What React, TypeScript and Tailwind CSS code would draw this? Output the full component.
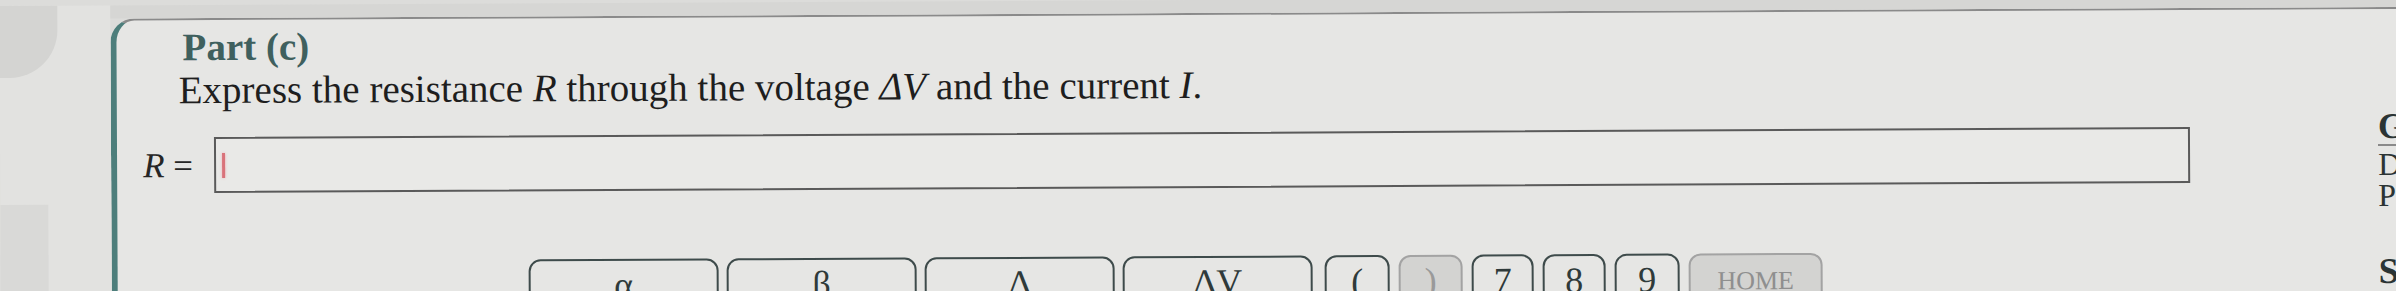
import React from 'react';

const greekKeys = ['α', 'β', 'Δ', 'ΔV'];

// digit / bracket keys: label, width, disabled
const smallKeys: { label: string; w: string; off?: boolean }[] = [
    { label: '(', w: 'w-[65px]' },
    { label: ')', w: 'w-[64px]', off: true },
    { label: '7', w: 'w-[62px]' },
    { label: '8', w: 'w-[63px]' },
    { label: '9', w: 'w-[65px]' },
];

export default function App() {
    return (
        <div className="w-[2396px] h-[291px] overflow-hidden bg-[#dcdcda] font-['Liberation_Serif',serif]">
            {/* the photo is slightly tilted, so the whole page is too */}
            <div className="flex w-full h-full -rotate-[0.29deg]">

                {/* left strip outside the panel */}
                <div className="w-[111px] shrink-0 flex flex-col bg-[#e2e2e0]">
                    <div className="w-[58px] h-[72px] bg-[#d4d4d2] rounded-br-[48px]"></div>
                    <div className="flex-1"></div>
                    <div className="w-[48px] h-[92px] bg-[#d9d9d7]"></div>
                </div>

                <div className="flex-1 flex flex-col">
                    <div className="h-[13px] shrink-0 bg-[#d6d6d4]"></div>

                    {/* panel */}
                    <div className="flex-1 flex bg-[#e6e6e4] border-t-2 border-t-[#8a8a8a] border-l-[6px] border-l-[#4d7e7b] rounded-tl-[24px]">

                        <div className="w-[2261px] shrink-0 flex flex-col pt-[7px]">
                            <h2 className="ml-[66px] text-[39px] leading-[39px] font-bold text-[#3f605e]">
                                Part (c)
                            </h2>
                            <p className="ml-[62px] mt-[5px] text-[39px] leading-[38px] text-[#1e1e1e]">
                                Express the resistance <i>R</i> through the voltage <i>ΔV</i> and the current <i>I</i>.
                            </p>

                            {/* answer row */}
                            <div className="ml-[26px] mt-[28px] flex items-center h-[56px]">
                                <span className="w-[71px] shrink-0 text-[35px] leading-[35px] text-[#262626]">
                                    <i>R</i> =
                                </span>
                                <div className="w-[1976px] h-[56px] shrink-0 border-2 border-[#5a5a5a] bg-[#e9e9e7] flex items-center pl-[6px]">
                                    <div className="w-[3px] h-[25px] bg-[#d9727a] shadow-[0_0_3px_#f0b0b5]"></div>
                                </div>
                            </div>

                            {/* keypad */}
                            <div className="ml-[411px] mt-[68px] flex">
                                <div className="flex gap-2">
                                    {greekKeys.map((k) => (
                                        <button
                                            key={k}
                                            className="w-[190px] h-[64px] rounded-[12px] border-2 border-[#3e4b4b] flex justify-center pt-[6px] text-[36px] leading-[36px] text-[#2f3a3a]"
                                        >
                                            {k}
                                        </button>
                                    ))}
                                </div>
                                <div className="ml-3 flex gap-[9px]">
                                    {smallKeys.map((k) => (
                                        <button
                                            key={k.label}
                                            className={`${k.w} h-[64px] rounded-[12px] border-2 flex justify-center pt-[6px] text-[36px] leading-[36px] ${
                                                k.off
                                                    ? 'border-[#a3a3a3] bg-[#d3d3d1] text-[#9a9a9a]'
                                                    : 'border-[#3e4b4b] text-[#2f3a3a]'
                                            }`}
                                        >
                                            {k.label}
                                        </button>
                                    ))}
                                    <button className="w-[134px] h-[64px] rounded-[12px] border-2 border-[#a3a3a3] bg-[#d3d3d1] flex justify-center pt-[13px] text-[26px] leading-[26px] text-[#8f8f8f]">
                                        HOME
                                    </button>
                                </div>
                            </div>
                        </div>

                        {/* right column, mostly off screen */}
                        <div className="flex flex-col pt-[99px] text-[#2b3434]">
                            <div className="w-[120px] text-[36px] leading-[36px] font-bold border-b-2 border-[#8a8a8a]">G</div>
                            <div className="mt-[2px] text-[32px] leading-[32px]">D</div>
                            <div className="text-[32px] leading-[31px]">P</div>
                            <div className="mt-[42px] text-[36px] leading-[36px] font-bold">S</div>
                        </div>
                    </div>
                </div>
            </div>
        </div>
    );
}
